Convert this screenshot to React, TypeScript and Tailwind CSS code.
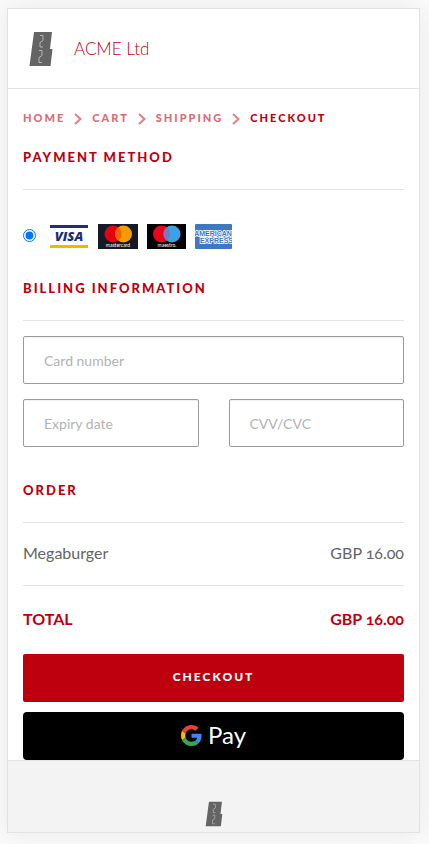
import { useState, type ReactNode } from 'react';

const steps = ['Home', 'Cart', 'Shipping'];

const order = {
  items: [{ name: 'Megaburger', price: 'GBP 16.00' }],
  total: 'GBP 16.00',
};

function Logo({ className }: { className?: string }) {
  return (
    <svg aria-label="ACME Ltd" className={className} role="img" viewBox="0 0 24 36">
      <path d="M5 1h18l-2 17h2.500l-2 17H.5z" fill="#646464" />
      <g fill="none" stroke="#b4b4b4" strokeWidth="1">
        <path d="M11 4.500h3v5l-3 2v4.500h3" />
        <path d="M10 19.500h3v5l-3 2v5h3" />
      </g>
    </svg>
  );
}

function Chevron() {
  return (
    <svg aria-hidden="true" className="mt-px h-3 w-2" fill="none" viewBox="0 0 8 12">
      <path d="M1 1l5.500 5L1 11" stroke="#de8087" strokeWidth="2" />
    </svg>
  );
}

function Visa() {
  return (
    <svg aria-label="Visa" className="h-[25px] w-[38px]" role="img" viewBox="0 0 38 25">
      <path d="M0 0h38v25H0z" fill="#fff" />
      <path d="M0 1h38v3H0z" fill="#202e78" />
      <path d="M0 21h38v3H0z" fill="#f5b400" />
      <text
        className="font-[Open_Sans,sans-serif] text-[13px] font-extrabold italic"
        fill="#202e78"
        textAnchor="middle"
        x="19"
        y="17"
      >
        VISA
      </text>
    </svg>
  );
}

function Mastercard() {
  return (
    <svg aria-label="Mastercard" className="h-[25px] w-10" role="img" viewBox="0 0 40 25">
      <path d="M0 0h40v25H0z" fill="#141a26" />
      <circle cx="15" cy="10" fill="#e3000f" r="8.500" />
      <circle cx="25.500" cy="10" fill="#f59c00" r="8.500" />
      <path d="M20.250 3.300a8.500 8.500 0 0 1 0 13.400 8.500 8.500 0 0 1 0-13.400z" fill="#f26200" />
      <text className="font-[Lato,sans-serif] text-[5px]" fill="#fff" textAnchor="middle" x="20" y="23">
        mastercard
      </text>
    </svg>
  );
}

function Maestro() {
  return (
    <svg aria-label="Maestro" className="h-[25px] w-[39px]" role="img" viewBox="0 0 39 25">
      <path d="M0 0h39v25H0z" fill="#000" />
      <circle cx="14.500" cy="10" fill="#e8051a" r="8.500" />
      <circle cx="25" cy="10" fill="#3aa2e6" r="8.500" />
      <path d="M19.750 3.300a8.500 8.500 0 0 1 0 13.400 8.500 8.500 0 0 1 0-13.400z" fill="#7d75bd" />
      <text className="font-[Lato,sans-serif] text-[5px]" fill="#fff" textAnchor="middle" x="20" y="23">
        maestro.
      </text>
    </svg>
  );
}

function Amex() {
  return (
    <svg aria-label="American Express" className="h-[25px] w-[37px]" role="img" viewBox="0 0 37 25">
      <rect fill="#3f78bf" height="25" rx="1" width="37" />
      <g
        className="font-[Liberation_Sans,sans-serif] text-[7px] font-bold"
        fill="#3f78bf"
        paintOrder="stroke"
        stroke="#fff"
        strokeWidth="1.500"
      >
        <text textAnchor="middle" x="18" y="12">
          AMERICAN
        </text>
        <text textAnchor="end" x="38" y="19">
          EXPRESS
        </text>
      </g>
    </svg>
  );
}

function GoogleG() {
  return (
    <svg aria-hidden="true" className="size-[21px]" viewBox="0 0 48 48">
      <path d="M24 9.500c3.540 0 6.710 1.220 9.210 3.600l6.850-6.850C35.900 2.380 30.470 0 24 0 14.620 0 6.510 5.380 2.560 13.220l7.980 6.190C12.430 13.720 17.740 9.500 24 9.500z" fill="#e94235" />
      <path d="M46.980 24.550c0-1.570-.15-3.090-.38-4.550H24v9.020h12.940c-.58 2.960-2.260 5.480-4.780 7.180l7.730 6c4.510-4.180 7.090-10.360 7.090-17.650z" fill="#4285f4" />
      <path d="M10.530 28.590A14.500 14.500 0 0 1 9.770 24c0-1.600.27-3.140.76-4.590l-7.980-6.190A23.900 23.900 0 0 0 0 24c0 3.880.92 7.540 2.560 10.780z" fill="#fabb05" />
      <path d="M24 48c6.480 0 11.930-2.130 15.890-5.810l-7.730-6c-2.150 1.450-4.920 2.300-8.160 2.300-6.260 0-11.570-4.220-13.470-9.910l-7.980 6.190C6.510 42.620 14.620 48 24 48z" fill="#34a853" />
    </svg>
  );
}

function SectionTitle({ children }: { children: ReactNode }) {
  return (
    <h2 className="border-b border-[#e4e4e4] pb-[22px] text-[13px] leading-5 font-black tracking-[2px] text-[#be000e] uppercase">
      {children}
    </h2>
  );
}

function Field({ label, autoComplete }: { label: string; autoComplete: string }) {
  const [value, setValue] = useState('');

  return (
    <input
      aria-label={label}
      autoComplete={autoComplete}
      className="h-12 w-full min-w-0 rounded-xs border border-[#9b9b9b] bg-white px-5 text-sm text-[#646464] inset-shadow-2xs outline-none placeholder:text-[#b3b3b3] focus:border-[#646464]"
      inputMode="numeric"
      onChange={(e) => setValue(e.target.value)}
      placeholder={label}
      type="text"
      value={value}
    />
  );
}

export default function App() {
  return (
    <div className="min-h-screen bg-[#fafafa] pt-2 pr-[9px] pb-[11px] pl-[7px] font-[Lato,'Open_Sans',sans-serif]">
      <div className="border border-[#e2e2e2] bg-white shadow-[0_0_25px_rgba(0,0,0,0.07)]">
        <header className="flex h-20 items-center gap-5 border-b border-[#e2e2e2] px-5">
          <Logo className="h-9 w-6.5" />
          <h1 className="text-[17px] font-light text-[#be000e]">ACME Ltd</h1>
        </header>

        <main className="px-[15px]">
          {/* Breadcrumb */}
          <nav aria-label="Checkout steps" className="pt-[21px]">
            <ol className="flex items-center gap-2.5 text-[11px] leading-4 font-black tracking-[2px] uppercase">
              {steps.map((step) => (
                <li className="flex items-center gap-[9px] text-[#da6b73]" key={step}>
                  <a href="#">{step}</a>
                  <Chevron />
                </li>
              ))}
              <li aria-current="step" className="text-[#be000e]">
                Checkout
              </li>
            </ol>
          </nav>

          <form onSubmit={(e) => e.preventDefault()}>
            {/* Payment method */}
            <section className="pt-[21px]">
              <SectionTitle>Payment method</SectionTitle>
              <label className="mt-[34px] flex items-center">
                <input
                  aria-label="Pay by card"
                  className="mr-3.5 mb-0.5 size-[13px]"
                  defaultChecked
                  name="method"
                  type="radio"
                  value="card"
                />
                <span className="flex items-center gap-2.5">
                  <Visa />
                  <span className="flex items-center gap-[9px]">
                    <Mastercard />
                    <Maestro />
                    <Amex />
                  </span>
                </span>
              </label>
            </section>

            {/* Billing */}
            <section className="pt-[29px]">
              <SectionTitle>Billing information</SectionTitle>
              <div className="mt-[15px] grid gap-[15px]">
                <Field autoComplete="cc-number" label="Card number" />
                <div className="grid grid-cols-2 gap-[30px]">
                  <Field autoComplete="cc-exp" label="Expiry date" />
                  <Field autoComplete="cc-csc" label="CVV/CVC" />
                </div>
              </div>
            </section>

            {/* Order summary */}
            <section className="pt-[33px]">
              <SectionTitle>Order</SectionTitle>
              {order.items.map((item) => (
                <div
                  className="flex h-[63px] items-center justify-between border-b border-[#e4e4e4] pb-0.5 text-base text-[#646464] oldstyle-nums"
                  key={item.name}
                >
                  <span>{item.name}</span>
                  <span>{item.price}</span>
                </div>
              ))}
              <div className="flex h-[68px] items-center justify-between pb-0.5 text-base font-bold text-[#be000e] oldstyle-nums">
                <span>TOTAL</span>
                <span>{order.total}</span>
              </div>
            </section>

            <button
              className="block h-12 w-full rounded-xs bg-[#be000e] pb-0.5 text-xs font-black tracking-[2px] text-white uppercase"
              type="submit"
            >
              Checkout
            </button>
            <button
              aria-label="Google Pay"
              className="mt-2.5 flex h-12 w-full items-center justify-center gap-1.5 rounded-sm bg-black pb-0.5 text-white"
              type="button"
            >
              <GoogleG />
              <span className="text-2xl leading-6">Pay</span>
            </button>
          </form>
        </main>

        <footer className="flex h-[72px] justify-center border-t border-[#e2e2e2] bg-[#f3f3f3] pt-10">
          <Logo className="h-[26px] w-5" />
        </footer>
      </div>
    </div>
  );
}
